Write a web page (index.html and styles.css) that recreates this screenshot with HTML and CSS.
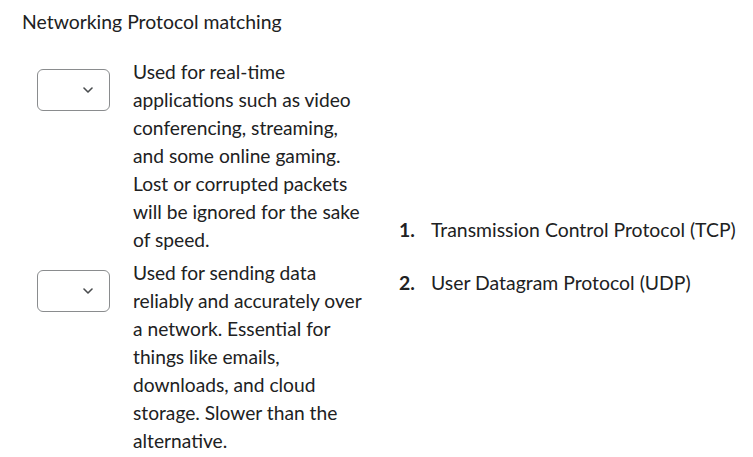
FILE: index.html
```html
<!DOCTYPE html>
<html>
<head>
<meta charset="utf-8">
<link rel="stylesheet" href="styles.css">
</head>
<body>
<div class="question">
  <h2 class="title">Networking Protocol matching</h2>
  <div class="matching">
    <div class="choices">
      <div class="choice">
        <div class="select"><svg class="chev" width="10" height="6" viewBox="0 0 10 6"><path d="M1 1 L5 5 L9 1" fill="none" stroke="#494c4e" stroke-width="1.6" stroke-linecap="round" stroke-linejoin="round"/></svg></div>
        <p class="desc">Used for real-time applications such as video conferencing, streaming, and some online gaming. Lost or corrupted packets will be ignored for the sake of speed.</p>
      </div>
      <div class="choice">
        <div class="select"><svg class="chev" width="10" height="6" viewBox="0 0 10 6"><path d="M1 1 L5 5 L9 1" fill="none" stroke="#494c4e" stroke-width="1.6" stroke-linecap="round" stroke-linejoin="round"/></svg></div>
        <p class="desc">Used for sending data reliably and accurately over a network. Essential for things like emails, downloads, and cloud storage. Slower than the alternative.</p>
      </div>
    </div>
    <ol class="answers">
      <li><span class="num">1.</span><span>Transmission Control Protocol (TCP)</span></li>
      <li><span class="num">2.</span><span>User Datagram Protocol (UDP)</span></li>
    </ol>
  </div>
</div>
</body>
</html>
```
FILE: styles.css
```css
html, body {
  margin: 0;
  padding: 0;
  background: #ffffff;
}
body {
  font-family: Lato, "Open Sans", sans-serif;
  color: #202122;
}
.question {
  padding: 8px 0 0 22px;
}
.title {
  margin: 0;
  font-size: 19.4px;
  font-weight: 400;
  line-height: 28px;
}
.matching {
  display: flex;
  align-items: center;
  margin-top: 22px;
}
.choices {
  display: flex;
  flex-direction: column;
  gap: 5px;
  width: 355px;
}
.choice {
  display: flex;
  align-items: flex-start;
}
.select {
  box-sizing: border-box;
  width: 73px;
  height: 42px;
  margin: 11px 23px 0 15px;
  border: 1px solid #8a8c8e;
  border-radius: 6px;
  display: flex;
  align-items: center;
  justify-content: flex-end;
  padding-right: 16px;
  flex: none;
}
.chev {
  display: block;
}
.desc {
  margin: 0;
  width: 235px;
  font-size: 19.2px;
  line-height: 28px;
}
.answers {
  list-style: none;
  margin: 0 0 0 22px;
  padding: 0;
  display: flex;
  flex-direction: column;
  gap: 25px;
  font-size: 19.4px;
  line-height: 28px;
}
.answers li {
  display: flex;
  white-space: nowrap;
}
.num {
  font-weight: 700;
  width: 32px;
  flex: none;
}
```
